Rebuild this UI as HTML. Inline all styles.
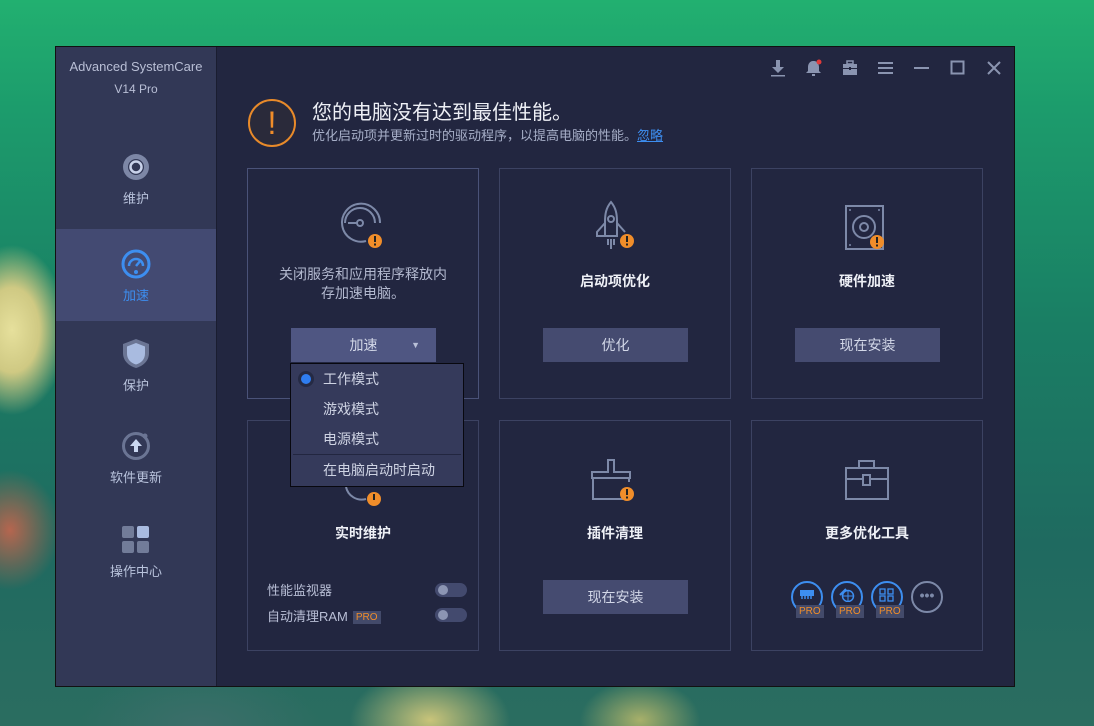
<!DOCTYPE html>
<html><head><meta charset="utf-8"><style>
*{margin:0;padding:0;box-sizing:border-box}
body{width:1094px;height:726px;overflow:hidden;position:relative;font-family:"Liberation Sans","Noto Sans CJK SC",sans-serif;
background:
radial-gradient(ellipse 55px 85px at 12px 330px,#e6e09c 0%,#cfc983 50%,rgba(207,201,131,0) 100%),
radial-gradient(ellipse 50px 60px at 10px 530px,#b5664f 0%,rgba(181,102,79,0) 100%),
radial-gradient(ellipse 80px 50px at 430px 720px,#c9c47a 0%,rgba(201,196,122,0) 100%),
radial-gradient(ellipse 60px 40px at 640px 720px,#a8b06a 0%,rgba(168,176,106,0) 100%),
radial-gradient(ellipse 120px 60px at 200px 726px,#3c6e6a 0%,rgba(60,110,106,0) 100%),
linear-gradient(180deg,#22b070 0%,#1c9c6c 15%,#1a7e64 45%,#1f6a60 75%,#2b6d60 100%);}
.win{position:absolute;left:55px;top:46px;width:960px;height:641px;background:#222640;border:1px solid #111;}
.side{position:absolute;left:0;top:0;width:161px;height:100%;background:#323856;border-right:1px solid #1a1d30}
.logo{color:#b9bfd6;text-align:center;font-size:13px;margin-top:12px}
.ver{color:#b9bfd6;text-align:center;font-size:12px;margin-top:8px}
.nav{position:absolute;left:0;width:160px;height:92px;text-align:center;color:#b9c3dc;font-size:13px}
.nav.act{background:#434a72;color:#3d8ef0}
.nav svg{display:block;margin:0 auto 6px}
.tb{position:absolute;top:10px;right:8px;display:flex;gap:12px}
.tb div{width:24px;height:22px;display:flex;align-items:center;justify-content:center}
.warn{position:absolute;left:192px;top:52px;width:48px;height:48px;border:2px solid #e88a2a;border-radius:50%;color:#f08d2a;font-size:32px;text-align:center;line-height:44px;font-weight:300;background:#2a2a3a}
.h1{position:absolute;left:256px;top:49px;color:#eef0f6;font-size:20px}
.h2{position:absolute;left:256px;top:78px;color:#a7afc8;font-size:13px}
.h2 a{color:#3d8ef0;text-decoration:underline}
.card{position:absolute;width:232px;height:231px;border:1px solid #3c4262}
.ic{position:absolute;left:0;right:0;top:32px;display:flex;justify-content:center}
.tt{position:absolute;left:0;right:0;top:101px;text-align:center;color:#eef0f6;font-size:14px;font-weight:bold}
.desc{position:absolute;left:30px;right:30px;top:96px;text-align:center;color:#b3b9cf;font-size:14px;line-height:19px}
.btn{position:absolute;left:43px;top:159px;width:145px;height:34px;background:#454b70;color:#d3d8e8;font-size:14px;text-align:center;line-height:34px}
.dd{position:absolute;left:234px;top:316px;width:174px;height:124px;background:#353a5b;border:1px solid #08080f;font-size:14px;color:#ced3e3}
.dd div{height:30px;line-height:30px;padding-left:32px;position:relative}
.tg{position:absolute;width:32px;height:14px;border-radius:7px;background:#434a6e}
.tg:before{content:"";position:absolute;left:3px;top:2px;width:10px;height:10px;border-radius:50%;background:#8c95b3}
.pro{display:inline-block;background:#434a6a;color:#f08d2a;font-size:10px;padding:0 3px;line-height:13px;vertical-align:1px;margin-left:5px}
.tool{position:absolute;width:32px;height:32px;border-radius:50%;border:2px solid #3d8ef0}
.tool svg{position:absolute;left:6px;top:5px}
.tool span{position:absolute;left:3px;top:22px;background:#434a6a;color:#f08d2a;font-size:10px;padding:0 3px;line-height:13px}
</style></head><body>
<div class="win">
 <div class="side">
  <div class="logo">Advanced SystemCare</div>
  <div class="ver">V14 Pro</div>
  <div class="nav" style="top:105px"><svg width="30" height="30" viewBox="0 0 30 30"><circle cx="15" cy="15" r="13" fill="#7d87a6"/><circle cx="15" cy="15" r="8" fill="#323856"/><circle cx="15" cy="15" r="5.5" fill="none" stroke="#c9d2ea" stroke-width="2.5"/></svg>维护</div>
  <div class="nav act" style="top:182px;padding-top:20px"><svg width="30" height="30" viewBox="0 0 30 30"><circle cx="15" cy="15" r="13" fill="none" stroke="#3d8ef0" stroke-width="3"/><path d="M8 17a7 7 0 0 1 14 0" fill="none" stroke="#3d8ef0" stroke-width="2.5"/><path d="M15 17l5-6" stroke="#3d8ef0" stroke-width="2.5"/><circle cx="15" cy="23" r="2" fill="#3d8ef0"/></svg>加速</div>
  <div class="nav" style="top:290px"><svg width="30" height="32" viewBox="0 0 30 32"><path d="M15 2L28 7v9c0 8-6 13-13 15C8 29 2 24 2 16V7z" fill="#6b7594"/><path d="M15 6l9 3.5v7c0 6-4 9.5-9 11-5-1.5-9-5-9-11v-7z" fill="#a9bbe0"/></svg>保护</div>
  <div class="nav" style="top:384px"><svg width="30" height="30" viewBox="0 0 30 30"><circle cx="15" cy="15" r="12.5" fill="none" stroke="#6b7594" stroke-width="3"/><circle cx="24" cy="5" r="2.5" fill="#6b7594"/><path d="M15 8l-6 7h4v6h4v-6h4z" fill="#c9d6f0"/></svg>软件更新</div>
  <div class="nav" style="top:478px"><svg width="30" height="30" viewBox="0 0 30 30"><rect x="1" y="1" width="12" height="12" rx="2" fill="#727c99"/><rect x="16" y="1" width="12" height="12" rx="2" fill="#a9bbe0"/><rect x="1" y="16" width="12" height="12" rx="2" fill="#727c99"/><rect x="16" y="16" width="12" height="12" rx="2" fill="#727c99"/></svg>操作中心</div>
 </div>
 <div class="tb">
  <div><svg width="16" height="18"><path d="M6 1h4v7h4l-6 6-6-6h4z" fill="#8a94b0"/><rect x="1" y="16" width="14" height="1.5" fill="#8a94b0"/></svg></div>
  <div><svg width="18" height="18"><path d="M8 2c-3 0-5 3-5 6v4l-2 2h15l-2-2V8c0-3-2-6-5-6z" fill="#8a94b0"/><rect x="7" y="15" width="3" height="2" fill="#8a94b0"/><circle cx="14" cy="3" r="2.5" fill="#e03a3a"/></svg></div>
  <div><svg width="16" height="16"><rect x="5" y="1" width="6" height="3" fill="none" stroke="#8a94b0" stroke-width="1.5"/><rect x="1" y="4" width="14" height="11" fill="#8a94b0"/><rect x="1" y="8" width="14" height="1" fill="#222640"/><rect x="7" y="7" width="2" height="3" fill="#222640"/></svg></div>
  <div><svg width="16" height="14"><rect y="1" width="15" height="2" fill="#8a94b0"/><rect y="6" width="15" height="2" fill="#8a94b0"/><rect y="11" width="15" height="2" fill="#8a94b0"/></svg></div>
  <div><svg width="16" height="4"><rect y="1" width="15" height="2" fill="#8a94b0"/></svg></div>
  <div><svg width="16" height="16"><rect x="1.5" y="1.5" width="12" height="12" fill="none" stroke="#8a94b0" stroke-width="2"/></svg></div>
  <div><svg width="16" height="16"><path d="M2 2l12 12M14 2L2 14" stroke="#8a94b0" stroke-width="2"/></svg></div>
 </div>
 <div class="warn">!</div>
 <div class="h1">您的电脑没有达到最佳性能。</div>
 <div class="h2">优化启动项并更新过时的驱动程序，以提高电脑的性能。<a>忽略</a></div>

 <div class="card" style="left:191px;top:121px;border-color:#4a5278">
  <div class="ic"><svg width="50" height="48" viewBox="0 0 50 48"><path d="M28 40A19 19 0 1 1 42 22" fill="none" stroke="#7d89a8" stroke-width="2"/><path d="M7 20a15 15 0 0 1 30 0" fill="none" stroke="#7d89a8" stroke-width="2" transform="translate(0,2)"/><circle cx="22" cy="22" r="3" fill="none" stroke="#7d89a8" stroke-width="2"/><path d="M10 22h9" stroke="#7d89a8" stroke-width="2"/><circle cx="37" cy="40" r="7" fill="#f08d2a"/><rect x="36" y="35" width="2" height="6" fill="#222"/><rect x="36" y="42.5" width="2" height="2" fill="#222"/></svg></div>
  <div class="desc">关闭服务和应用程序释放内存加速电脑。</div>
  <div class="btn" style="background:#4f5682">加速<span style="position:absolute;right:16px;top:0;font-size:9px;color:#b9c0d8">▼</span></div>
 </div>
 <div class="card" style="left:443px;top:121px">
  <div class="ic" style="top:30px"><svg width="50" height="52" viewBox="0 0 50 52"><path d="M21 3c-5 6-6 12-6 20v14h12V23c0-8-1-14-6-20z" fill="none" stroke="#7d89a8" stroke-width="2"/><circle cx="21" cy="20" r="3" fill="none" stroke="#7d89a8" stroke-width="2"/><path d="M15 24l-8 9v4h8M27 24l8 9" fill="none" stroke="#7d89a8" stroke-width="2"/><path d="M18 40v6M21 40v10M24 40v6" stroke="#7d89a8" stroke-width="2"/><circle cx="37" cy="42" r="7" fill="#f08d2a"/><rect x="36" y="37" width="2" height="6" fill="#222"/><rect x="36" y="44.5" width="2" height="2" fill="#222"/></svg></div>
  <div class="tt" style="top:102px">启动项优化</div>
  <div class="btn">优化</div>
 </div>
 <div class="card" style="left:695px;top:121px">
  <div class="ic" style="top:36px"><svg width="50" height="46" viewBox="0 0 50 46"><rect x="4" y="1" width="37" height="43" fill="none" stroke="#7d89a8" stroke-width="2"/><circle cx="22" cy="22" r="11" fill="none" stroke="#7d89a8" stroke-width="2"/><circle cx="22" cy="22" r="4" fill="none" stroke="#7d89a8" stroke-width="2"/><circle cx="8" cy="5" r="1" fill="#7d89a8"/><circle cx="37" cy="5" r="1" fill="#7d89a8"/><circle cx="8" cy="40" r="1" fill="#7d89a8"/><circle cx="35" cy="37" r="7" fill="#f08d2a"/><rect x="34" y="32" width="2" height="6" fill="#222"/><rect x="34" y="39.5" width="2" height="2" fill="#222"/></svg></div>
  <div class="tt" style="top:102px">硬件加速</div>
  <div class="btn">现在安装</div>
 </div>

 <div class="card" style="left:191px;top:373px">
  <div class="ic" style="top:38px"><svg width="50" height="48" viewBox="0 0 50 48"><path d="M8 28a16 16 0 0 0 20 12" fill="none" stroke="#7d89a8" stroke-width="2"/><circle cx="36" cy="40" r="7" fill="#f08d2a"/><rect x="35" y="35" width="2" height="6" fill="#222"/></svg></div>
  <div class="tt" style="top:102px">实时维护</div>
  <div style="position:absolute;left:19px;top:159px;color:#b9bfd6;font-size:13px">性能监视器</div>
  <div class="tg" style="left:187px;top:162px"></div>
  <div style="position:absolute;left:19px;top:185px;color:#b9bfd6;font-size:13px">自动清理RAM<span class="pro">PRO</span></div>
  <div class="tg" style="left:187px;top:187px"></div>
 </div>
 <div class="card" style="left:443px;top:373px">
  <div class="ic" style="top:38px"><svg width="50" height="44" viewBox="0 0 50 44"><path d="M18 1h6v12h16v6H2v-6h16z" fill="none" stroke="#7d89a8" stroke-width="2"/><path d="M3 19v21h30M39 19v4" fill="none" stroke="#7d89a8" stroke-width="2"/><circle cx="37" cy="35" r="7" fill="#f08d2a"/><rect x="36" y="30" width="2" height="6" fill="#222"/><rect x="36" y="37.5" width="2" height="2" fill="#222"/></svg></div>
  <div class="tt" style="top:102px">插件清理</div>
  <div class="btn">现在安装</div>
 </div>
 <div class="card" style="left:695px;top:373px">
  <div class="ic" style="top:39px"><svg width="46" height="40" viewBox="0 0 46 40"><rect x="15" y="1" width="15" height="7" fill="none" stroke="#7d89a8" stroke-width="2"/><rect x="2" y="8" width="42" height="31" fill="none" stroke="#7d89a8" stroke-width="2"/><path d="M2 19h42" stroke="#7d89a8" stroke-width="2"/><rect x="19" y="15" width="7" height="10" fill="#222640" stroke="#7d89a8" stroke-width="2"/></svg></div>
  <div class="tt" style="top:102px">更多优化工具</div>
  <div class="tool" style="left:39px;top:160px"><svg width="16" height="12"><rect x="1" y="2" width="14" height="6" fill="#3d8ef0"/><path d="M3 8v3M6 8v3M9 8v3M12 8v3" stroke="#3d8ef0" stroke-width="1.5"/></svg><span>PRO</span></div>
  <div class="tool" style="left:79px;top:160px"><svg width="16" height="14"><circle cx="9" cy="8" r="5.5" fill="none" stroke="#3d8ef0" stroke-width="1.5"/><path d="M3.5 8h11M9 2.5v11" stroke="#3d8ef0" stroke-width="1"/><path d="M1 7l6-6" stroke="#3d8ef0" stroke-width="2"/></svg><span>PRO</span></div>
  <div class="tool" style="left:119px;top:160px"><svg width="16" height="14"><rect x="1" y="1" width="5" height="5" fill="none" stroke="#3d8ef0" stroke-width="1.3"/><rect x="9" y="1" width="5" height="5" fill="none" stroke="#3d8ef0" stroke-width="1.3"/><rect x="1" y="8" width="5" height="5" fill="none" stroke="#3d8ef0" stroke-width="1.3"/><rect x="9" y="8" width="5" height="5" fill="none" stroke="#3d8ef0" stroke-width="1.3"/></svg><span>PRO</span></div>
  <div class="tool" style="left:159px;top:160px;border-color:#7d89a8;color:#7d89a8;text-align:center;line-height:24px;font-size:14px;font-weight:bold">•••</div>
 </div>

 <div class="dd">
  <div><span style="position:absolute;left:10px;top:10px;width:10px;height:10px;border-radius:50%;background:#2f7df0;box-shadow:0 0 0 3px #252a44"></span>工作模式</div>
  <div>游戏模式</div>
  <div>电源模式</div>
  <div style="border-top:1px solid #222640;margin:0 2px;padding-left:30px">在电脑启动时启动</div>
 </div>
</div>
</body></html>
